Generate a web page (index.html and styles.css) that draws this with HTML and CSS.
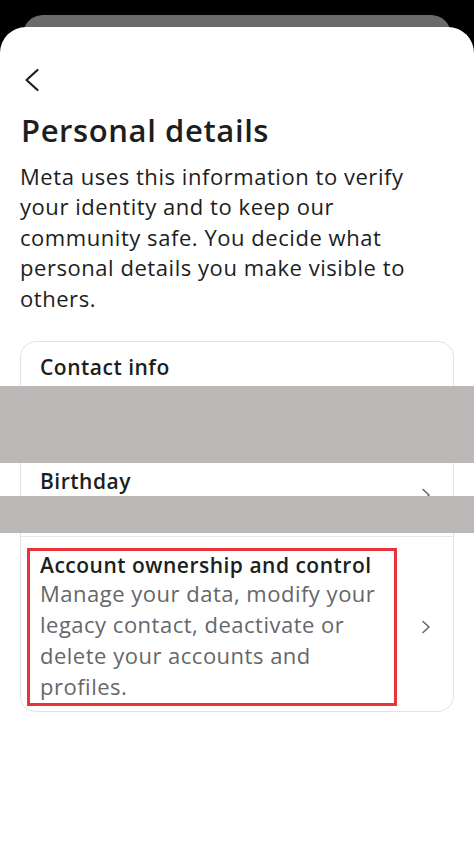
FILE: index.html
```html
<!DOCTYPE html>
<html lang="en">
<head>
<meta charset="utf-8">
<title>Personal details</title>
<link rel="stylesheet" href="styles.css">
</head>
<body>
<div class="screen">
  <div class="peek"></div>
  <main class="sheet">
    <button class="back" aria-label="Back">
      <svg width="16" height="24" viewBox="0 0 16 24"><path d="M13.5 2 L2.5 12 L13.5 22" fill="none" stroke="#1c1e21" stroke-width="2.2" stroke-linecap="round" stroke-linejoin="round"/></svg>
    </button>
    <h1 class="title">Personal details</h1>
    <p class="intro">Meta uses this information to verify your identity and to keep our community safe. You decide what personal details you make visible to others.</p>

    <section class="card">
      <div class="row row-contact">
        <div class="row-title">Contact info</div>
      </div>
      <div class="row row-birthday">
        <div class="row-body">
          <div class="row-title">Birthday</div>
        </div>
        <svg class="chev" width="10" height="14" viewBox="0 0 10 14"><path d="M2 1.5 L8 7 L2 12.5" fill="none" stroke="#65676b" stroke-width="1.6" stroke-linecap="round" stroke-linejoin="round"/></svg>
      </div>
      <div class="row row-account">
        <div class="highlight">
          <div class="row-title strong">Account ownership and control</div>
          <div class="row-desc">Manage your data, modify your legacy contact, deactivate or delete your accounts and profiles.</div>
        </div>
        <svg class="chev" width="10" height="14" viewBox="0 0 10 14"><path d="M2 1.5 L8 7 L2 12.5" fill="none" stroke="#65676b" stroke-width="1.6" stroke-linecap="round" stroke-linejoin="round"/></svg>
      </div>
    </section>

    <div class="redact redact-1"></div>
    <div class="redact redact-2"></div>
  </main>
</div>
</body>
</html>
```

FILE: styles.css
```css
* { box-sizing: border-box; }
html, body { margin: 0; padding: 0; }
body {
  background: #000;
  font-family: "Open Sans", "Noto Sans", "Liberation Sans", sans-serif;
  color: #1c1e21;
}
.screen {
  width: 474px;
  height: 842px;
  overflow: hidden;
  background: #000;
  padding-top: 15px;
}
.peek {
  height: 30px;
  margin: 0 23px;
  background: #6b6b6b;
  border-radius: 20px 20px 0 0;
}
.sheet {
  display: flow-root;
  position: relative;
  margin-top: -18px;
  height: 815px;
  background: #fff;
  border-radius: 26px 26px 0 0;
  padding: 0 20px;
}
.back {
  display: block;
  border: 0;
  background: none;
  padding: 0;
  margin: 41px 0 0 4px;
  width: 16px;
  height: 24px;
  line-height: 0;
}
.title {
  margin: 19px 0 0 1px;
  font-size: 31px;
  font-weight: 600;
  line-height: 38px;
  letter-spacing: 0.6px;
  color: #1c1e21;
}
.intro {
  margin: 12px 0 0;
  font-size: 22px;
  line-height: 30.4px;
  letter-spacing: 0.55px;
  color: #1c1e21;
}
.card {
  margin-top: 28px;
  border: 1px solid #e2e3e5;
  border-radius: 16px;
  overflow: hidden;
}
.row {
  display: flex;
  align-items: center;
  padding-left: 19px;
  padding-right: 22px;
}
.row-body { flex: 1; }
.row-title {
  font-size: 21px;
  line-height: 26px;
  font-weight: 600;
  letter-spacing: 0.5px;
  color: #1c1e21;
}
.row-contact {
  height: 114px;
  align-items: flex-start;
  padding-top: 12px;
}
.row-birthday {
  height: 81px;
  align-items: flex-start;
  padding-top: 12px;
  border-bottom: 1px solid #e7e8ea;
}
.row-birthday .chev { margin-top: 20px; }
.row-account {
  padding: 11px 22px 5px 6px;
}
.highlight {
  width: 370px;
  border: 3px solid #e8333a;
  padding: 1px 10px 1px 10px;
  margin-right: auto;
}
.row-desc {
  font-size: 22px;
  line-height: 31px;
  letter-spacing: 0.5px;
  color: #65676b;
}
.chev { flex: none; }
.redact {
  position: absolute;
  left: 0;
  right: 0;
  background: #bcb8b7;
}
.redact-1 { top: 359px; height: 77px; }
.redact-2 { top: 469px; height: 37px; }
```
